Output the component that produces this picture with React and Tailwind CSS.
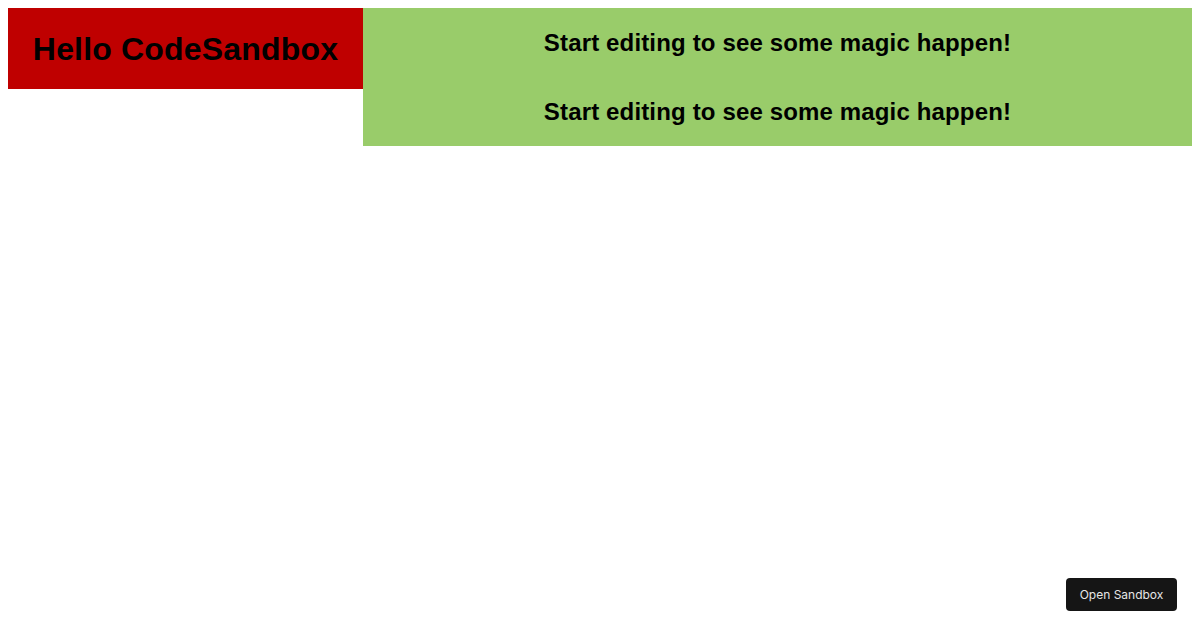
export default function App() {
  return (
    <div className="min-h-[630px] bg-white p-2 font-['Liberation_Sans',Arial,sans-serif] text-black">
      <div className="flex items-start">
        <div className="flex h-[81px] w-[355px] shrink-0 items-center justify-center bg-[#bf0000]">
          <h1 className="text-[32px] font-bold leading-none tracking-[0.18px]">Hello CodeSandbox</h1>
        </div>
        <div className="flex flex-1 flex-col bg-[#99cc6a]">
          <h2 className="flex h-[69px] items-center justify-center text-[24px] font-bold leading-none tracking-[0.15px]">
            Start editing to see some magic happen!
          </h2>
          <h2 className="flex h-[69px] items-center justify-center text-[24px] font-bold leading-none tracking-[0.15px]">
            Start editing to see some magic happen!
          </h2>
        </div>
      </div>
      <button className="fixed bottom-[19px] right-[23px] flex h-[33px] w-[111px] items-center justify-center rounded-[4px] bg-[#151515] font-['Inter',sans-serif] text-[12px] text-[#e6e6e6]">
        Open Sandbox
      </button>
    </div>
  );
}
